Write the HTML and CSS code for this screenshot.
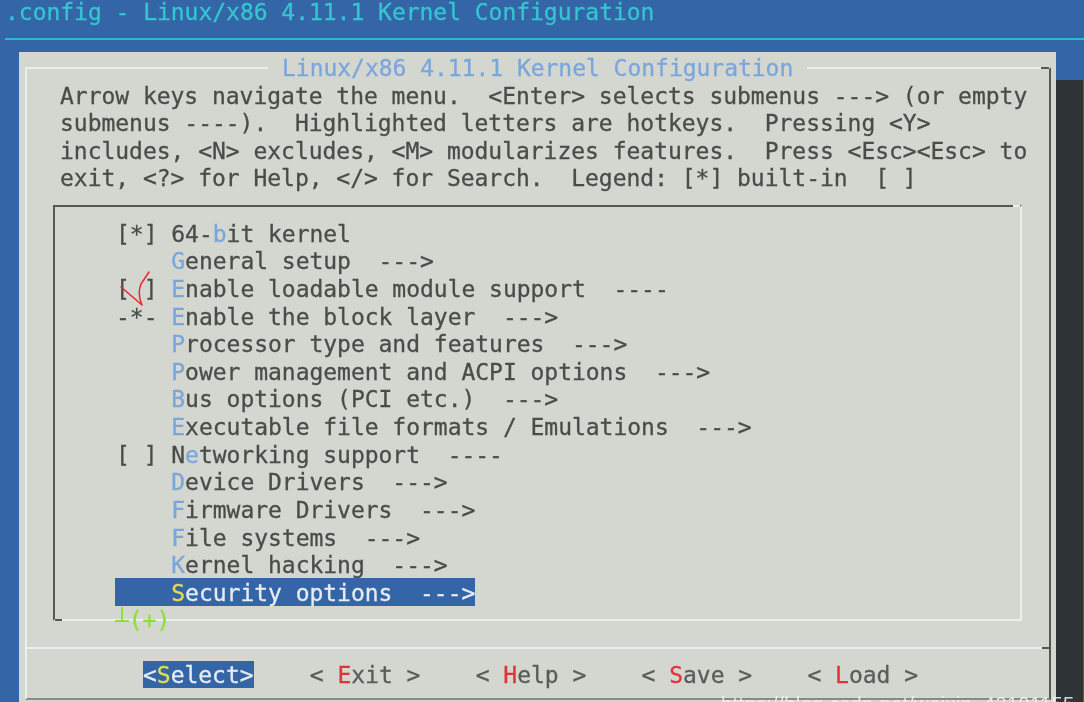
FILE: index.html
```html
<!DOCTYPE html>
<html lang="en">
<head>
<meta charset="utf-8">
<title>Linux/x86 4.11.1 Kernel Configuration</title>
<link rel="stylesheet" href="styles.css">
</head>
<body>
<div class="screen">
  <header class="backtitle">.config - Linux/x86 4.11.1 Kernel Configuration</header>
  <div class="rule"></div>
  <main class="dialog">
    <section class="frame">
      <h1 class="dialog-title">Linux/x86 4.11.1 Kernel Configuration</h1>
      <div class="help">Arrow keys navigate the menu.  &lt;Enter&gt; selects submenus ---&gt; (or empty
submenus ----).  Highlighted letters are hotkeys.  Pressing &lt;Y&gt;
includes, &lt;N&gt; excludes, &lt;M&gt; modularizes features.  Press &lt;Esc&gt;&lt;Esc&gt; to
exit, &lt;?&gt; for Help, &lt;/&gt; for Search.  Legend: [*] built-in  [ ]</div>
      <div class="menu">
        <div class="row">[*] 64-<span class="key">b</span>it kernel</div>
        <div class="row">    <span class="key">G</span>eneral setup  ---&gt;</div>
        <div class="row">[ ] <span class="key">E</span>nable loadable module support  ----</div>
        <div class="row">-*- <span class="key">E</span>nable the block layer  ---&gt;</div>
        <div class="row">    <span class="key">P</span>rocessor type and features  ---&gt;</div>
        <div class="row">    <span class="key">P</span>ower management and ACPI options  ---&gt;</div>
        <div class="row">    <span class="key">B</span>us options (PCI etc.)  ---&gt;</div>
        <div class="row">    <span class="key">E</span>xecutable file formats / Emulations  ---&gt;</div>
        <div class="row">[ ] N<span class="key">e</span>tworking support  ----</div>
        <div class="row">    <span class="key">D</span>evice Drivers  ---&gt;</div>
        <div class="row">    <span class="key">F</span>irmware Drivers  ---&gt;</div>
        <div class="row">    <span class="key">F</span>ile systems  ---&gt;</div>
        <div class="row">    <span class="key">K</span>ernel hacking  ---&gt;</div>
        <div class="row selected">    <span class="key">S</span>ecurity options  ---&gt;</div>
        <div class="more"><span class="tee"></span>(+)</div>
      </div>
      <div class="buttons">
        <div class="btn active">&lt;<span class="hot">S</span>elect&gt;</div>
        <div class="btn">&lt; <span class="hot">E</span>xit &gt;</div>
        <div class="btn">&lt; <span class="hot">H</span>elp &gt;</div>
        <div class="btn">&lt; <span class="hot">S</span>ave &gt;</div>
        <div class="btn">&lt; <span class="hot">L</span>oad &gt;</div>
      </div>
    </section>
  </main>
</div>
<svg class="check" width="40" height="44" viewBox="0 0 40 44" fill="none" stroke="#e8262c" stroke-width="1.5" stroke-linecap="round" stroke-linejoin="round">
  <path d="M1 17 L22 35 Q17 24 21 14 L29 2"/>
</svg>
<div class="watermark">https://blog.csdn.net/weixin_43191155</div>
</body>
</html>
```
FILE: styles.css
```css
html, body {
  margin: 0;
  height: 702px;
  overflow: hidden;
  background: #3465a7;
}
body {
  position: relative;
}
.screen {
  height: 702px;
  overflow: hidden;
  font-family: "DejaVu Sans Mono", monospace;
  font-size: 23px;
  line-height: 27.65px;
  letter-spacing: -0.03px;
  color: #4b4c4a;
  -webkit-text-stroke: 0.3px currentColor;
  filter: blur(0.55px);
}
.backtitle, .dialog-title, .help, .row, .btn, .more {
  white-space: pre;
}
.backtitle {
  height: 26px;
  padding-left: 5px;
  color: #34c6d0;
  line-height: 25px;
}
.rule {
  height: 2px;
  margin: 12px 0 0 5px;
  background: #2fb9cb;
}
.dialog {
  box-sizing: border-box;
  width: 1037px;
  height: 680px;
  margin: 12px 0 0 19px;
  padding: 15px 5px 0 6px;
  background: #d3d7cf;
  box-shadow: 27px 28px 0 #2e3436;
}
.frame {
  position: relative;
  box-sizing: border-box;
  width: 1026px;
  height: 633px;
  border-top: 2px solid #eeeeec;
  border-left: 2px solid #eeeeec;
  border-right: 2px solid #555753;
  border-bottom: 2px solid #888a85;
}
.frame::after {
  content: "";
  position: absolute;
  top: -2px;
  right: 0;
  width: 8px;
  height: 2px;
  background: #555753;
}
.dialog-title {
  width: 511px;
  margin: -15px 0 0 241px;
  padding: 0 14px;
  background: #d3d7cf;
  color: #7ba6dc;
  font: inherit;
  line-height: 29px;
}
.help {
  height: 110.1px;
  margin: -0.5px 0 0 33px;
}
.menu {
  position: relative;
  box-sizing: border-box;
  width: 969px;
  height: 416px;
  margin: 12px 0 0 26px;
  padding: 12px 0 0 60px;
  border-top: 2px solid #555753;
  border-left: 2px solid #555753;
  border-right: 2px solid #eeeeec;
  border-bottom: 2px solid #eeeeec;
}
.menu::before {
  content: "";
  position: absolute;
  top: -2px;
  right: 0;
  width: 7px;
  height: 2px;
  background: #eeeeec;
}
.menu::after {
  content: "";
  position: absolute;
  bottom: -2px;
  left: 0;
  width: 7px;
  height: 2px;
  background: #555753;
}
.row {
  width: max-content;
  height: 27.65px;
  padding-left: 1px;
  line-height: 30.65px;
}
.key {
  color: #7ba6dc;
}
.selected {
  background: #3465a7;
  color: #e6ecf2;
}
.selected .key {
  color: #e8dc4e;
}
.more {
  position: absolute;
  left: 60px;
  bottom: -16px;
  display: flex;
  color: #8ae234;
}
.tee {
  position: relative;
  width: 13.8px;
  height: 27.65px;
}
.tee::before {
  content: "";
  position: absolute;
  left: 0;
  right: 0;
  top: 13px;
  height: 2px;
  background: #8ae234;
}
.tee::after {
  content: "";
  position: absolute;
  left: 6px;
  top: 0;
  width: 2px;
  height: 14px;
  background: #8ae234;
}
.buttons {
  position: relative;
  display: flex;
  gap: 55.3px;
  height: 52px;
  margin-top: 26px;
  padding: 12px 0 0 116px;
  border-top: 2px solid #eeeeec;
}
.buttons::after {
  content: "";
  position: absolute;
  top: -2px;
  right: 0;
  width: 7px;
  height: 2px;
  background: #555753;
}
.btn {
  height: 27.65px;
  color: #5b5c5a;
  line-height: 29.65px;
}
.btn .hot {
  color: #e0333a;
}
.btn.active {
  margin-right: 1px;
  background: #3465a7;
  color: #e6ecf2;
}
.btn.active .hot {
  color: #e8dc4e;
}
.check {
  position: absolute;
  left: 120px;
  top: 270px;
}
.watermark {
  position: absolute;
  left: 721px;
  top: 693px;
  color: #f4f5f2;
  font-family: "Liberation Sans", sans-serif;
  font-size: 20px;
  letter-spacing: 0.4px;
  opacity: 0.85;
}
```
